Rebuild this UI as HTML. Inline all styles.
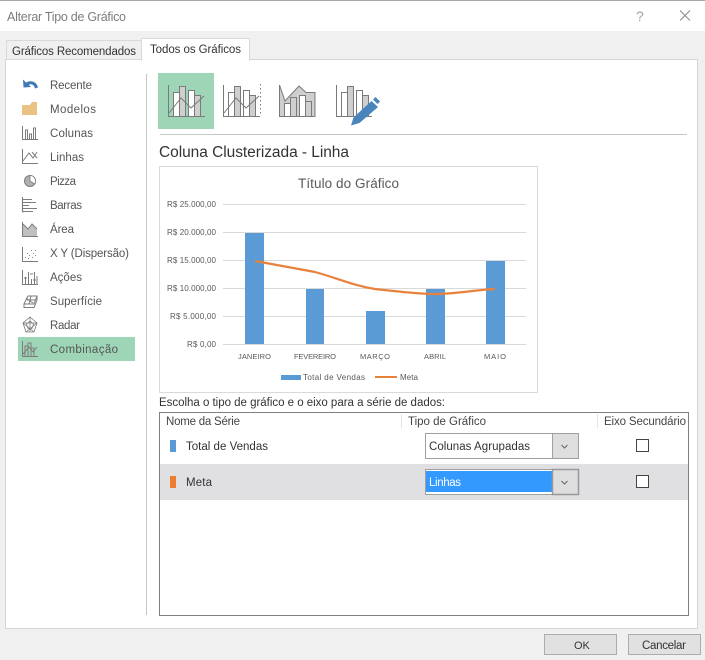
<!DOCTYPE html>
<html lang="pt"><head><meta charset="utf-8"><title>Alterar Tipo de Gráfico</title>
<style>html,body{margin:0;padding:0;background:#f0f0f0}svg{display:block}
text{font-family:"Liberation Sans",sans-serif;font-size:11.5px;fill:#444}</style></head>
<body>
<svg xmlns="http://www.w3.org/2000/svg" width="705" height="660" viewBox="0 0 705 660">
<rect width="705" height="660" fill="#f0f0f0"/>
<rect width="705" height="31" fill="#fff"/>
<rect width="705" height="1" fill="#a9a9a9"/>
<text x="7" y="21" style="font-size:12.5px;fill:#7d7d7d" textLength="119" lengthAdjust="spacing">Alterar Tipo de Gráfico</text>
<text x="636" y="21" style="font-size:14px;fill:#a0a0a0">?</text>
<path d="M680 10.5L690 20.5M690 10.5L680 20.5" stroke="#8a8a8a" stroke-width="1" fill="none"/>

<!-- panel -->
<rect x="5.5" y="59.5" width="692" height="569" fill="#fff" stroke="#d5d5d5"/>
<rect x="6.5" y="40.5" width="135" height="19" fill="#f0f0f0" stroke="#d9d9d9"/>
<rect x="141.5" y="38.5" width="108" height="22" fill="#fff" stroke="#d9d9d9"/>
<rect x="142" y="59" width="107" height="2" fill="#fff"/>
<text x="12" y="55" style="fill:#333" textLength="124" lengthAdjust="spacing">Gráficos Recomendados</text>
<text x="150" y="53" style="fill:#333" textLength="91" lengthAdjust="spacing">Todos os Gráficos</text>

<!-- side -->
<rect x="146" y="74" width="1" height="541" fill="#c6c6c6"/>
<rect x="18" y="337" width="117" height="24" fill="#9fd5b7"/>
<g>
<text x="50" y="89" style="fill:#555" textLength="42" lengthAdjust="spacing">Recente</text>
<text x="50" y="113" style="fill:#555" textLength="46" lengthAdjust="spacing">Modelos</text>
<text x="50" y="137" style="fill:#555" textLength="43" lengthAdjust="spacing">Colunas</text>
<text x="50" y="161" style="fill:#555" textLength="34" lengthAdjust="spacing">Linhas</text>
<text x="50" y="185" style="fill:#555" textLength="26" lengthAdjust="spacing">Pizza</text>
<text x="50" y="209" style="fill:#555" textLength="32" lengthAdjust="spacing">Barras</text>
<text x="50" y="233" style="fill:#555" textLength="24" lengthAdjust="spacing">Área</text>
<text x="50" y="257" style="fill:#555" textLength="79" lengthAdjust="spacing">X Y (Dispersão)</text>
<text x="50" y="281" style="fill:#555" textLength="32" lengthAdjust="spacing">Ações</text>
<text x="50" y="305" style="fill:#555" textLength="52" lengthAdjust="spacing">Superfície</text>
<text x="50" y="329" style="fill:#555" textLength="30" lengthAdjust="spacing">Radar</text>
<text x="50" y="353" style="fill:#555" textLength="68" lengthAdjust="spacing">Combinação</text>
</g>

<!-- side icons -->
<path d="M23 79.5L23.5 87.5L31 87L28.8 84.8C31 83.6 34 84.4 35 88.5L38 87.5C36.6 81.5 30.6 79.8 26.2 82.6Z" fill="#3f79b5"/>
<path d="M22 105H30L32 102H37V115H22Z" fill="#e9c284"/>
<g fill="none" stroke="#7c7c7c" stroke-width="1">
<path d="M22.5 126V139.5H38M25.5 139V130H27.5V139M29.5 139V134H31.5V139M33.5 139V128H35.5V139"/>
<path d="M22.5 149V163.5H38M23 161L29 153L33 158L37 152M32 152L37 158"/>
<path d="M22.5 197V212.5M22.5 199.5H32M22.5 202.5H36M22.5 205.5H29M22.5 208.5H37M22.5 211.5H33" stroke-width="1.1"/>
<path d="M22.5 222V236.5H38"/>
<path d="M22.5 247V261.5H38"/>
<path d="M22.5 270V284.5H38M25.5 284V277M28.5 284V272M31.5 284V279M34.5 284V272M37 284V276M24 278H27M30 274H33M33 280H36"/>
<path d="M24 304L28 296H37L34 304ZM24 304V307.5H34L37 300V296M27 300H36M31 296L29 304M26 298L33 303"/>
<path d="M30 317L37 323L34 332H26L23 323ZM30 321L33.5 324L32 328.5H28L26.5 324ZM30 317V332M23 323L37 323M26 332L37 323M34 332L23 323" stroke-width=".8"/>
<path d="M22.5 341V356.5H38M25 356V346H28V356M28 356V343H31V356M31 356V348H34V356M23 354L29 347L33 352L37 347"/>
</g>
<circle cx="30" cy="181" r="5.5" fill="#b0b0b0" stroke="#7c7c7c"/>
<path d="M30 181V175.5A5.5 5.5 0 0 1 34.6 184Z" fill="#fff" stroke="#7c7c7c" stroke-width=".8"/>
<path d="M23 236V224L28 229L32 224L37 229V236Z" fill="#c0c0c0"/>
<path d="M23 224L28 229L32 224L37 229" fill="none" stroke="#7c7c7c"/>
<g fill="#8a8a8a"><rect x="25" y="257" width="1" height="1"/><rect x="27" y="253" width="1" height="1"/><rect x="29" y="255" width="1" height="1"/><rect x="31" y="250" width="1" height="1"/><rect x="33" y="253" width="1" height="1"/><rect x="35" y="250" width="1" height="1"/><rect x="28" y="258" width="1" height="1"/><rect x="32" y="257" width="1" height="1"/><rect x="35" y="255" width="1" height="1"/></g>

<!-- top chart-type icons -->
<rect x="158" y="73" width="56" height="56" fill="#9fd5b7"/>
<rect x="160" y="134" width="527" height="1" fill="#c6c6c6"/>
<g stroke="#7a7a7a" stroke-width="1">
<g>
<path d="M168.5 85V116.5H205" fill="none"/>
<rect x="173.5" y="92.5" width="6" height="24" fill="#fff"/><rect x="179.5" y="86.5" width="6" height="30" fill="#cfcfcf"/>
<rect x="188.5" y="90.5" width="6" height="26" fill="#fff"/><rect x="194.5" y="95.5" width="6" height="21" fill="#cfcfcf"/>
<path d="M169 113L181 98L191 108L204 96" fill="none"/>
</g>
<g>
<path d="M223.5 85V116.5H260" fill="none"/>
<rect x="228.5" y="92.5" width="6" height="24" fill="#fff"/><rect x="234.5" y="86.5" width="6" height="30" fill="#cfcfcf"/>
<rect x="243.5" y="90.5" width="6" height="26" fill="#fff"/><rect x="249.5" y="95.5" width="6" height="21" fill="#cfcfcf"/>
<path d="M224 113L236 98L246 108L259 96" fill="none"/>
<path d="M260.5 84V116" fill="none" stroke-dasharray="1.5 2.5"/>
</g>
<g>
<path d="M279.5 85L285 101L299 86L306 92.5H315V116.5H279.5Z" fill="#cfcfcf"/>
<rect x="284.5" y="103.5" width="6" height="13" fill="#fff"/><rect x="290.5" y="97.5" width="6" height="19" fill="#cfcfcf"/>
<rect x="299.5" y="95.5" width="6" height="21" fill="#fff"/><rect x="305.5" y="101.5" width="6" height="15" fill="#cfcfcf"/>
</g>
<g>
<path d="M336.5 85V116.5H372" fill="none"/>
<rect x="341.5" y="92.5" width="6" height="24" fill="#fff"/><rect x="347.5" y="86.5" width="6" height="30" fill="#cfcfcf"/>
<rect x="356.5" y="90.5" width="6" height="26" fill="#fff"/><rect x="362.5" y="95.5" width="6" height="21" fill="#cfcfcf"/>
</g>
</g>
<path d="M351 125.5L353.5 117.5L371.5 101L378 107L359.5 123Z" fill="#4a84bd"/>
<path d="M373 99.5L375.5 97L380 101.5L377.5 104Z" fill="#4a84bd"/>

<text x="159" y="157" style="font-size:15.5px;fill:#333" textLength="190" lengthAdjust="spacing">Coluna Clusterizada - Linha</text>

<!-- chart -->
<rect x="159.5" y="166.5" width="378" height="226" fill="#fff" stroke="#d9d9d9"/>
<text x="298" y="188" style="font-size:13.5px;fill:#595959" textLength="101" lengthAdjust="spacing">Título do Gráfico</text>
<g fill="#d9d9d9">
<rect x="223" y="204" width="303" height="1"/><rect x="223" y="232" width="303" height="1"/><rect x="223" y="260" width="303" height="1"/><rect x="223" y="288" width="303" height="1"/><rect x="223" y="316" width="303" height="1"/><rect x="223" y="344" width="303" height="1"/>
</g>
<g fill="#5b9bd5">
<rect x="245" y="233" width="19" height="111"/><rect x="306" y="289" width="18" height="55"/><rect x="366" y="311" width="19" height="33"/><rect x="426" y="289" width="19" height="55"/><rect x="486" y="261" width="19" height="83"/>
</g>
<path d="M255 261L315 272C340 279 355 286 375 289C395 291 415 294 435 294C455 294 475 290 495 289" fill="none" stroke="#e8813c" stroke-width="2.2"/>
<text x="167" y="207" style="font-size:8px;fill:#595959" textLength="49" lengthAdjust="spacing">R$ 25.000,00</text>
<text x="167" y="235" style="font-size:8px;fill:#595959" textLength="49" lengthAdjust="spacing">R$ 20.000,00</text>
<text x="167" y="263" style="font-size:8px;fill:#595959" textLength="49" lengthAdjust="spacing">R$ 15.000,00</text>
<text x="167" y="291" style="font-size:8px;fill:#595959" textLength="49" lengthAdjust="spacing">R$ 10.000,00</text>
<text x="170" y="319" style="font-size:8px;fill:#595959" textLength="46" lengthAdjust="spacing">R$ 5.000,00</text>
<text x="187" y="347" style="font-size:8px;fill:#595959" textLength="29" lengthAdjust="spacing">R$ 0,00</text>
<g>
<text x="238" y="359" style="font-size:7.5px;fill:#595959" textLength="33" lengthAdjust="spacing">JANEIRO</text>
<text x="294" y="359" style="font-size:7.5px;fill:#595959" textLength="42" lengthAdjust="spacing">FEVEREIRO</text>
<text x="360" y="359" style="font-size:7.5px;fill:#595959" textLength="30" lengthAdjust="spacing">MARÇO</text>
<text x="424" y="359" style="font-size:7.5px;fill:#595959" textLength="22" lengthAdjust="spacing">ABRIL</text>
<text x="484" y="359" style="font-size:7.5px;fill:#595959" textLength="22" lengthAdjust="spacing">MAIO</text>
<text x="303" y="380" style="font-size:8px;fill:#595959" textLength="62" lengthAdjust="spacing">Total de Vendas</text>
<text x="400" y="380" style="font-size:8px;fill:#595959" textLength="18" lengthAdjust="spacing">Meta</text>
</g>
<rect x="281" y="375" width="20" height="5" fill="#5b9bd5"/>
<rect x="375" y="376" width="22" height="2" fill="#e8813c"/>

<!-- table -->
<text x="159" y="406" style="fill:#333" textLength="286" lengthAdjust="spacing">Escolha o tipo de gráfico e o eixo para a série de dados:</text>
<rect x="159.5" y="412.5" width="529" height="203" fill="#fff" stroke="#7f7f7f"/>
<rect x="160" y="464" width="528" height="36" fill="#e0e0e3"/>
<rect x="401" y="414" width="1" height="14" fill="#e5e5e5"/><rect x="597" y="414" width="1" height="14" fill="#e5e5e5"/>
<text x="166" y="425" style="fill:#444" textLength="74" lengthAdjust="spacing">Nome da Série</text>
<text x="408" y="425" style="fill:#444" textLength="78" lengthAdjust="spacing">Tipo de Gráfico</text>
<text x="604" y="425" style="fill:#444" textLength="82" lengthAdjust="spacing">Eixo Secundário</text>
<rect x="170" y="440" width="6" height="12" fill="#5b9bd5"/>
<rect x="170" y="476" width="6" height="12" fill="#ed7d31"/>
<text x="186" y="450" style="fill:#333" textLength="82" lengthAdjust="spacing">Total de Vendas</text>
<text x="186" y="486" style="fill:#333" textLength="26" lengthAdjust="spacing">Meta</text>

<rect x="425.5" y="433.5" width="153" height="25" fill="#fff" stroke="#a0a0a0"/>
<rect x="552.5" y="433.5" width="26" height="25" fill="#dedede" stroke="#a0a0a0"/>
<path d="M561.5 445L564.5 448L567.5 445" fill="none" stroke="#666"/>
<text x="429" y="450" style="fill:#333" textLength="101" lengthAdjust="spacing">Colunas Agrupadas</text>

<rect x="425.5" y="469.5" width="153" height="25" fill="#fff" stroke="#a0a0a0"/>
<rect x="426" y="471" width="126" height="21" fill="#3399ff"/>
<rect x="552.5" y="469.5" width="26" height="25" fill="#dedede" stroke="#999" stroke-width="1.5"/>
<path d="M561.5 481L564.5 484L567.5 481" fill="none" stroke="#666"/>
<text x="429" y="486" style="fill:#fff" textLength="32" lengthAdjust="spacing">Linhas</text>

<rect x="636.5" y="439.5" width="12" height="12" fill="#fff" stroke="#444"/>
<rect x="636.5" y="475.5" width="12" height="12" fill="#fff" stroke="#444"/>

<!-- buttons -->
<rect x="544.5" y="634.5" width="72" height="20" fill="#e1e1e1" stroke="#adadad"/>
<rect x="628.5" y="634.5" width="72" height="20" fill="#e1e1e1" stroke="#adadad"/>
<text x="574" y="649" style="font-size:11px;fill:#333">OK</text>
<text x="642" y="649" style="fill:#333" textLength="44" lengthAdjust="spacing">Cancelar</text>
</svg>
</body></html>
